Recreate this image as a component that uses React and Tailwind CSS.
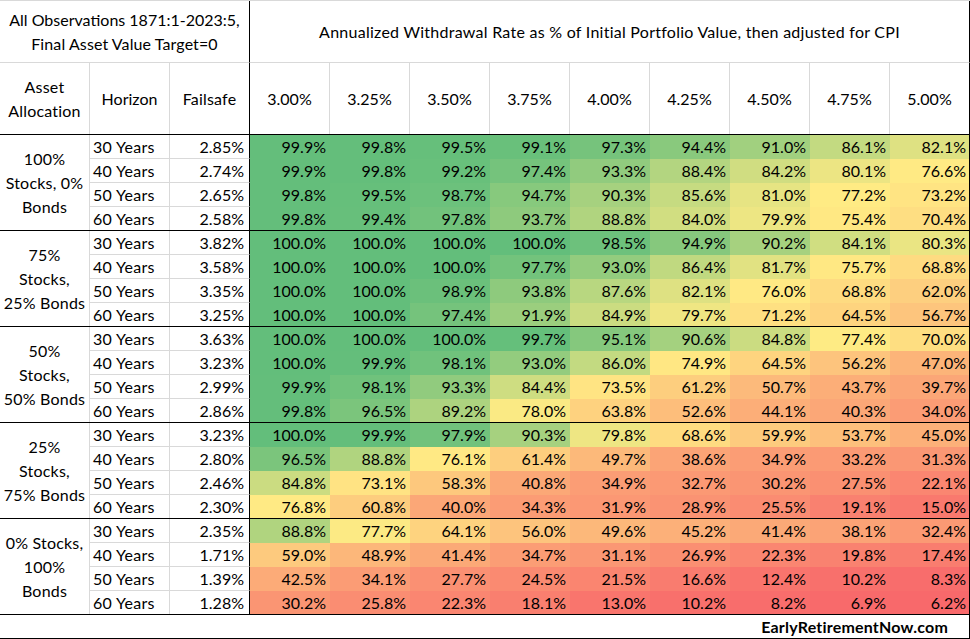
import React from "react";

const groups = [
  {
    label: ["100%", "Stocks, 0%", "Bonds"],
    rows: [
      ["30 Years", "2.85%", [99.9, 99.8, 99.5, 99.1, 97.3, 94.4, 91.0, 86.1, 82.1]],
      ["40 Years", "2.74%", [99.9, 99.8, 99.2, 97.4, 93.3, 88.4, 84.2, 80.1, 76.6]],
      ["50 Years", "2.65%", [99.8, 99.5, 98.7, 94.7, 90.3, 85.6, 81.0, 77.2, 73.2]],
      ["60 Years", "2.58%", [99.8, 99.4, 97.8, 93.7, 88.8, 84.0, 79.9, 75.4, 70.4]],
    ],
  },
  {
    label: ["75%", "Stocks,", "25% Bonds"],
    rows: [
      ["30 Years", "3.82%", [100.0, 100.0, 100.0, 100.0, 98.5, 94.9, 90.2, 84.1, 80.3]],
      ["40 Years", "3.58%", [100.0, 100.0, 100.0, 97.7, 93.0, 86.4, 81.7, 75.7, 68.8]],
      ["50 Years", "3.35%", [100.0, 100.0, 98.9, 93.8, 87.6, 82.1, 76.0, 68.8, 62.0]],
      ["60 Years", "3.25%", [100.0, 100.0, 97.4, 91.9, 84.9, 79.7, 71.2, 64.5, 56.7]],
    ],
  },
  {
    label: ["50%", "Stocks,", "50% Bonds"],
    rows: [
      ["30 Years", "3.63%", [100.0, 100.0, 100.0, 99.7, 95.1, 90.6, 84.8, 77.4, 70.0]],
      ["40 Years", "3.23%", [100.0, 99.9, 98.1, 93.0, 86.0, 74.9, 64.5, 56.2, 47.0]],
      ["50 Years", "2.99%", [99.9, 98.1, 93.3, 84.4, 73.5, 61.2, 50.7, 43.7, 39.7]],
      ["60 Years", "2.86%", [99.8, 96.5, 89.2, 78.0, 63.8, 52.6, 44.1, 40.3, 34.0]],
    ],
  },
  {
    label: ["25%", "Stocks,", "75% Bonds"],
    rows: [
      ["30 Years", "3.23%", [100.0, 99.9, 97.9, 90.3, 79.8, 68.6, 59.9, 53.7, 45.0]],
      ["40 Years", "2.80%", [96.5, 88.8, 76.1, 61.4, 49.7, 38.6, 34.9, 33.2, 31.3]],
      ["50 Years", "2.46%", [84.8, 73.1, 58.3, 40.8, 34.9, 32.7, 30.2, 27.5, 22.1]],
      ["60 Years", "2.30%", [76.8, 60.8, 40.0, 34.3, 31.9, 28.9, 25.5, 19.1, 15.0]],
    ],
  },
  {
    label: ["0% Stocks,", "100%", "Bonds"],
    rows: [
      ["30 Years", "2.35%", [88.8, 77.7, 64.1, 56.0, 49.6, 45.2, 41.4, 38.1, 32.4]],
      ["40 Years", "1.71%", [59.0, 48.9, 41.4, 34.7, 31.1, 26.9, 22.3, 19.8, 17.4]],
      ["50 Years", "1.39%", [42.5, 34.1, 27.7, 24.5, 21.5, 16.6, 12.4, 10.2, 8.3]],
      ["60 Years", "1.28%", [30.2, 25.8, 22.3, 18.1, 13.0, 10.2, 8.2, 6.9, 6.2]],
    ],
  },
];

const rates = ["3.00%", "3.25%", "3.50%", "3.75%", "4.00%", "4.25%", "4.50%", "4.75%", "5.00%"];

const all = groups.flatMap((g) => g.rows.flatMap((r) => r[2])).sort((a, b) => a - b);
const minV = all[0];
const maxV = all[all.length - 1];
const pos = 0.5 * (all.length - 1);
const lo = Math.floor(pos);
const midV = all[lo] + (all[lo + 1] - all[lo]) * (pos - lo);

const RED = [248, 105, 107];
const YEL = [255, 235, 132];
const GRN = [99, 190, 123];

function mix(a, b, t) {
  return a.map((x, i) => Math.round(x + (b[i] - x) * t));
}

function colorFor(v) {
  let c;
  if (v <= midV) c = mix(RED, YEL, (v - minV) / (midV - minV));
  else c = mix(YEL, GRN, (v - midV) / (maxV - midV));
  return `rgb(${c[0]},${c[1]},${c[2]})`;
}

export default function App() {
  return (
    <div className="w-[970px] h-[639px] bg-white text-black text-[16px] leading-[24px] overflow-hidden font-['Lato','Liberation_Sans',sans-serif]">
      {/* Header row 1 */}
      <div className="flex h-[63px] border-t border-[#d9d9d9]">
        <div className="w-[250px] h-full border-r border-r-black border-b border-b-[#d9d9d9] flex flex-col items-center justify-center">
          <div>All Observations 1871:1-2023:5,</div>
          <div className="tracking-[0.1px]">Final Asset Value Target=0</div>
        </div>
        <div className="w-[720px] h-full border-r border-r-black border-b border-b-[#d9d9d9] flex items-center justify-center tracking-[0.26px]">
          Annualized Withdrawal Rate as % of Initial Portfolio Value, then adjusted for CPI
        </div>
      </div>

      {/* Header row 2 */}
      <div className="flex h-[72px] border-b border-black">
        <div className="w-[90px] h-full border-r border-[#d9d9d9] flex flex-col items-center justify-center text-center tracking-[0.2px]">
          <div>Asset</div>
          <div>Allocation</div>
        </div>
        <div className="w-[80px] h-full border-r border-[#d9d9d9] flex items-center justify-center">
          Horizon
        </div>
        <div className="w-[80px] h-full border-r border-black flex items-center justify-center tracking-[0.2px]">
          Failsafe
        </div>
        {rates.map((r, i) => (
          <div
            key={r}
            className={
              i === rates.length - 1
                ? "w-[80px] h-full flex items-center justify-center border-r border-black"
                : "w-[80px] h-full flex items-center justify-center border-r border-[#d9d9d9]"
            }
          >
            {r}
          </div>
        ))}
      </div>

      {/* Groups */}
      {groups.map((g, gi) => (
        <div key={gi} className="flex h-[96px] border-b border-black">
          <div className="w-[90px] h-full border-r border-[#d9d9d9] flex flex-col items-center justify-center text-center tracking-[0.2px]">
            {g.label.map((l) => (
              <div key={l} className="whitespace-nowrap">{l}</div>
            ))}
          </div>
          <div className="flex flex-col w-[880px]">
            {g.rows.map((row, ri) => {
              const last = ri === g.rows.length - 1;
              return (
                <div key={ri} className={last ? "flex h-[23px]" : "flex h-[24px]"}>
                  <div
                    className={
                      last
                        ? "w-[80px] border-r border-[#d9d9d9] pl-[3px] flex items-center tracking-[0.3px]"
                        : "w-[80px] border-r border-b border-[#d9d9d9] pl-[3px] flex items-center tracking-[0.3px]"
                    }
                  >
                    {row[0]}
                  </div>
                  <div
                    className={
                      last
                        ? "w-[80px] border-r border-r-black pr-[5px] flex items-center justify-end"
                        : "w-[80px] border-r border-r-black border-b border-b-[#d9d9d9] pr-[5px] flex items-center justify-end"
                    }
                  >
                    {row[1]}
                  </div>
                  {row[2].map((v, ci) => (
                    <div
                      key={ci}
                      className={
                        ci === 8
                          ? "w-[80px] pr-[3px] flex items-center justify-end border-r border-black"
                          : "w-[80px] pr-[4px] flex items-center justify-end"
                      }
                      style={{ backgroundColor: colorFor(v) }}
                    >
                      {v.toFixed(1)}%
                    </div>
                  ))}
                </div>
              );
            })}
          </div>
        </div>
      ))}

      {/* Footer */}
      <div className="flex h-[24px] border-b border-black">
        <div className="w-[970px] h-full border-r border-black flex items-center justify-end pr-[21px] font-bold tracking-[0.2px]">
          EarlyRetirementNow.com
        </div>
      </div>
    </div>
  );
}
